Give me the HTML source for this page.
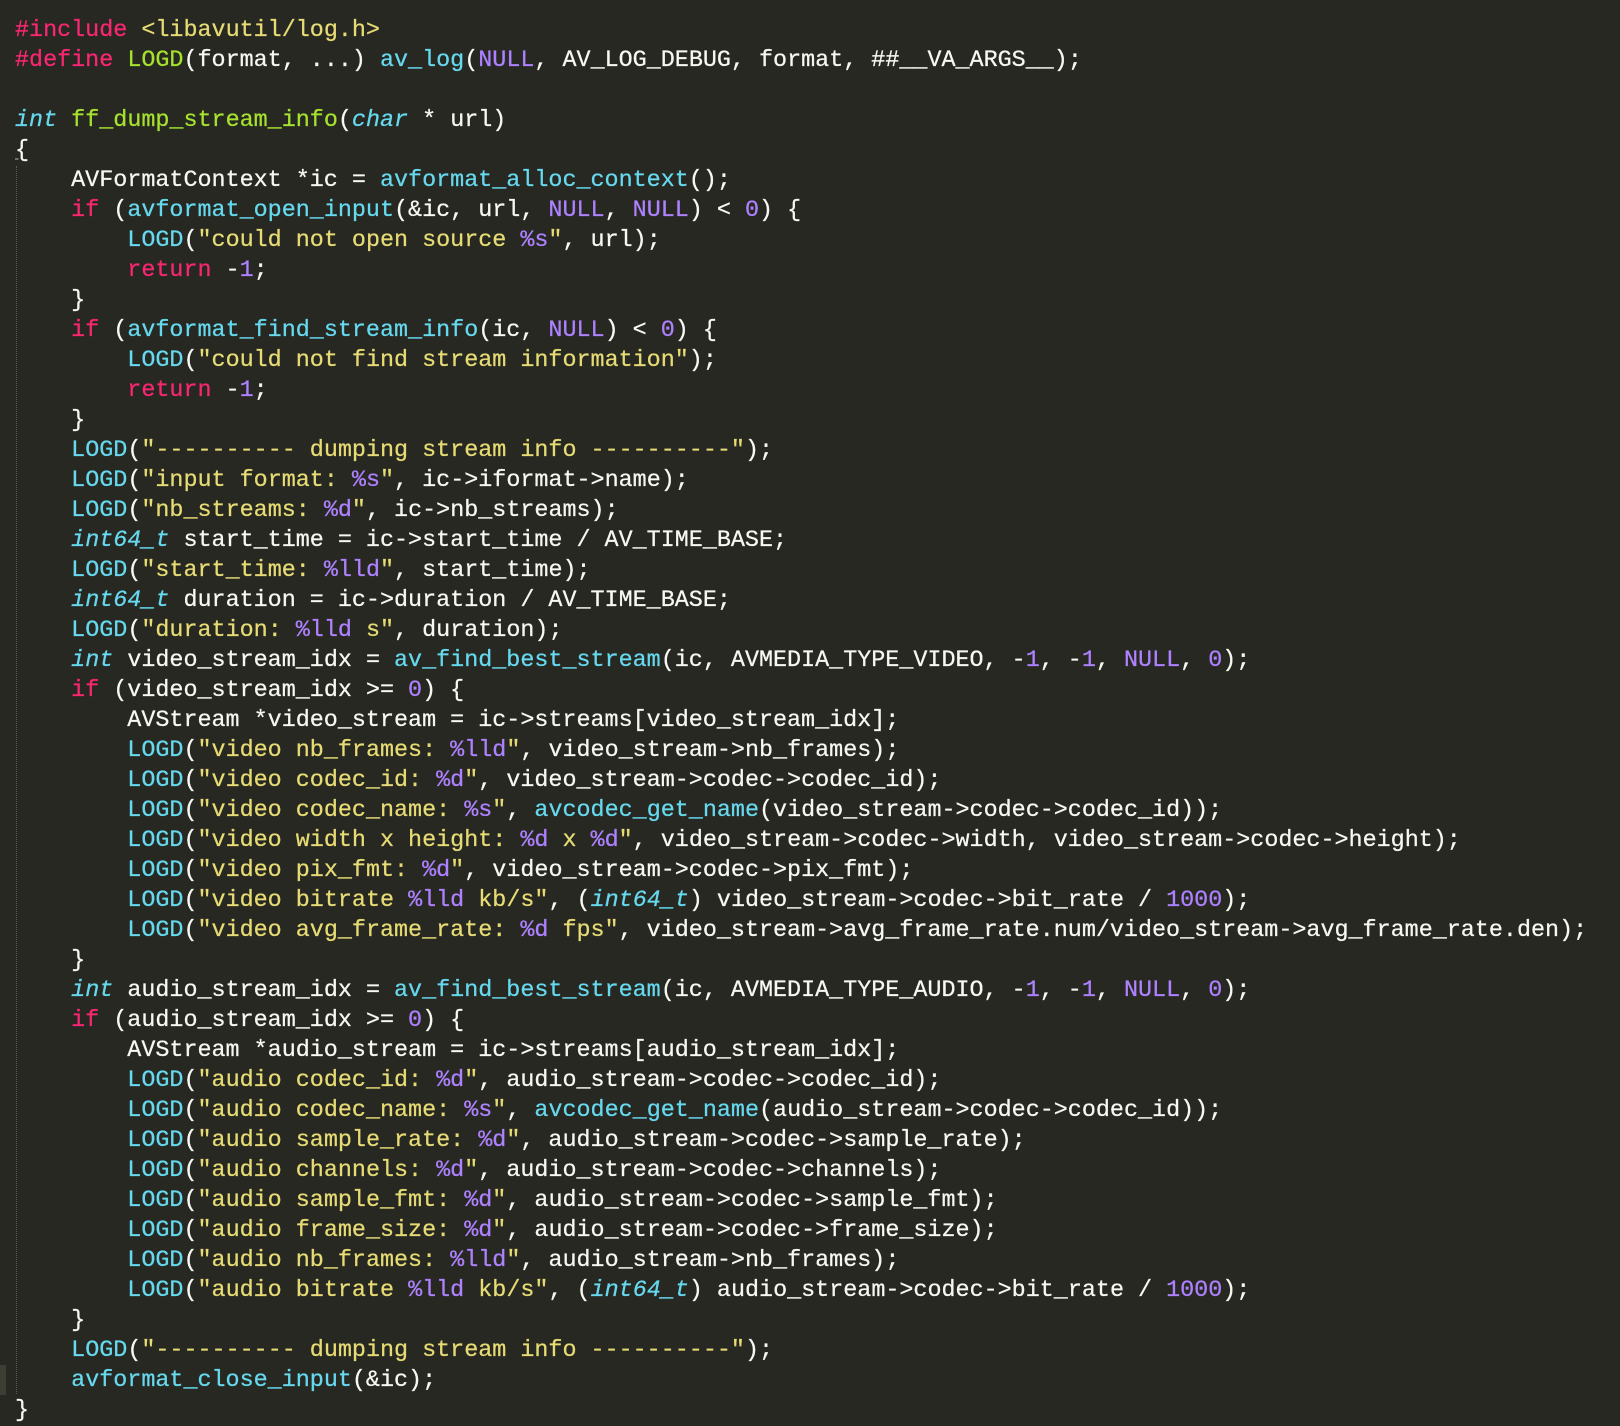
<!DOCTYPE html>
<html><head><meta charset="utf-8">
<style>
html,body{margin:0;padding:0;background:#272822;width:1620px;height:1424px;overflow:hidden}
pre{margin:0;position:absolute;left:15px;top:16px;font-family:"Liberation Mono",monospace;font-size:23.4px;line-height:30px;color:#f8f8f2;white-space:pre;-webkit-text-stroke:0.25px currentColor}
.k{color:#f92672}.s{color:#e6db74}.g{color:#a6e22e}.c{color:#66d9ef}.t{color:#66d9ef;font-style:italic}.n{color:#ae81ff}
.u{text-decoration:underline;text-decoration-color:#75715e}
.guide{position:absolute;left:16px;top:166px;height:1228px;border-left:1px dotted #5a5a52}
.mark{position:absolute;left:0;top:1365px;width:6px;height:30px;background:#3e3d32}
</style></head><body>
<div class="guide"></div><div class="mark"></div>
<pre><span class="k">#include</span> <span class="s">&lt;libavutil/log.h&gt;</span>
<span class="k">#define</span> <span class="g">LOGD</span>(format, ...) <span class="c">av_log</span>(<span class="n">NULL</span>, AV_LOG_DEBUG, format, ##__VA_ARGS__);

<span class="t">int</span> <span class="g">ff_dump_stream_info</span>(<span class="t">char</span> * url)
<span class="u">{</span>
    AVFormatContext *ic = <span class="c">avformat_alloc_context</span>();
    <span class="k">if</span> (<span class="c">avformat_open_input</span>(&amp;ic, url, <span class="n">NULL</span>, <span class="n">NULL</span>) &lt; <span class="n">0</span>) {
        <span class="c">LOGD</span>(<span class="s">"could not open source <span class="n">%s</span>"</span>, url);
        <span class="k">return</span> -<span class="n">1</span>;
    }
    <span class="k">if</span> (<span class="c">avformat_find_stream_info</span>(ic, <span class="n">NULL</span>) &lt; <span class="n">0</span>) {
        <span class="c">LOGD</span>(<span class="s">"could not find stream information"</span>);
        <span class="k">return</span> -<span class="n">1</span>;
    }
    <span class="c">LOGD</span>(<span class="s">"---------- dumping stream info ----------"</span>);
    <span class="c">LOGD</span>(<span class="s">"input format: <span class="n">%s</span>"</span>, ic-&gt;iformat-&gt;name);
    <span class="c">LOGD</span>(<span class="s">"nb_streams: <span class="n">%d</span>"</span>, ic-&gt;nb_streams);
    <span class="t">int64_t</span> start_time = ic-&gt;start_time / AV_TIME_BASE;
    <span class="c">LOGD</span>(<span class="s">"start_time: <span class="n">%lld</span>"</span>, start_time);
    <span class="t">int64_t</span> duration = ic-&gt;duration / AV_TIME_BASE;
    <span class="c">LOGD</span>(<span class="s">"duration: <span class="n">%lld</span> s"</span>, duration);
    <span class="t">int</span> video_stream_idx = <span class="c">av_find_best_stream</span>(ic, AVMEDIA_TYPE_VIDEO, -<span class="n">1</span>, -<span class="n">1</span>, <span class="n">NULL</span>, <span class="n">0</span>);
    <span class="k">if</span> (video_stream_idx &gt;= <span class="n">0</span>) {
        AVStream *video_stream = ic-&gt;streams[video_stream_idx];
        <span class="c">LOGD</span>(<span class="s">"video nb_frames: <span class="n">%lld</span>"</span>, video_stream-&gt;nb_frames);
        <span class="c">LOGD</span>(<span class="s">"video codec_id: <span class="n">%d</span>"</span>, video_stream-&gt;codec-&gt;codec_id);
        <span class="c">LOGD</span>(<span class="s">"video codec_name: <span class="n">%s</span>"</span>, <span class="c">avcodec_get_name</span>(video_stream-&gt;codec-&gt;codec_id));
        <span class="c">LOGD</span>(<span class="s">"video width x height: <span class="n">%d</span> x <span class="n">%d</span>"</span>, video_stream-&gt;codec-&gt;width, video_stream-&gt;codec-&gt;height);
        <span class="c">LOGD</span>(<span class="s">"video pix_fmt: <span class="n">%d</span>"</span>, video_stream-&gt;codec-&gt;pix_fmt);
        <span class="c">LOGD</span>(<span class="s">"video bitrate <span class="n">%lld</span> kb/s"</span>, (<span class="t">int64_t</span>) video_stream-&gt;codec-&gt;bit_rate / <span class="n">1000</span>);
        <span class="c">LOGD</span>(<span class="s">"video avg_frame_rate: <span class="n">%d</span> fps"</span>, video_stream-&gt;avg_frame_rate.num/video_stream-&gt;avg_frame_rate.den);
    }
    <span class="t">int</span> audio_stream_idx = <span class="c">av_find_best_stream</span>(ic, AVMEDIA_TYPE_AUDIO, -<span class="n">1</span>, -<span class="n">1</span>, <span class="n">NULL</span>, <span class="n">0</span>);
    <span class="k">if</span> (audio_stream_idx &gt;= <span class="n">0</span>) {
        AVStream *audio_stream = ic-&gt;streams[audio_stream_idx];
        <span class="c">LOGD</span>(<span class="s">"audio codec_id: <span class="n">%d</span>"</span>, audio_stream-&gt;codec-&gt;codec_id);
        <span class="c">LOGD</span>(<span class="s">"audio codec_name: <span class="n">%s</span>"</span>, <span class="c">avcodec_get_name</span>(audio_stream-&gt;codec-&gt;codec_id));
        <span class="c">LOGD</span>(<span class="s">"audio sample_rate: <span class="n">%d</span>"</span>, audio_stream-&gt;codec-&gt;sample_rate);
        <span class="c">LOGD</span>(<span class="s">"audio channels: <span class="n">%d</span>"</span>, audio_stream-&gt;codec-&gt;channels);
        <span class="c">LOGD</span>(<span class="s">"audio sample_fmt: <span class="n">%d</span>"</span>, audio_stream-&gt;codec-&gt;sample_fmt);
        <span class="c">LOGD</span>(<span class="s">"audio frame_size: <span class="n">%d</span>"</span>, audio_stream-&gt;codec-&gt;frame_size);
        <span class="c">LOGD</span>(<span class="s">"audio nb_frames: <span class="n">%lld</span>"</span>, audio_stream-&gt;nb_frames);
        <span class="c">LOGD</span>(<span class="s">"audio bitrate <span class="n">%lld</span> kb/s"</span>, (<span class="t">int64_t</span>) audio_stream-&gt;codec-&gt;bit_rate / <span class="n">1000</span>);
    }
    <span class="c">LOGD</span>(<span class="s">"---------- dumping stream info ----------"</span>);
    <span class="c">avformat_close_input</span>(&amp;ic);
}</pre>
</body></html>
